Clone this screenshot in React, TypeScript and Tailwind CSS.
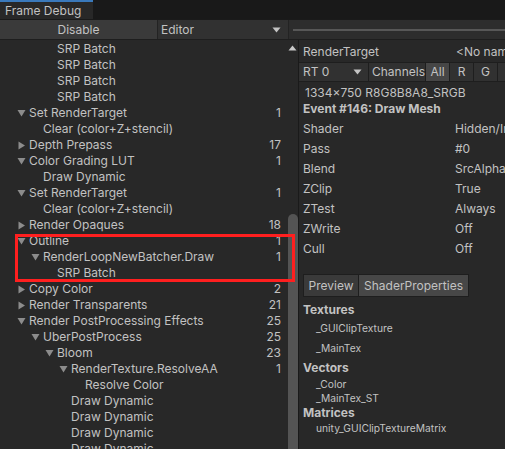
import React from "react";

type Row = { label: string; level: number; arrow?: "down" | "right"; count?: string };

const rows: Row[] = [
  { label: "SRP Batch", level: 3 },
  { label: "SRP Batch", level: 3 },
  { label: "SRP Batch", level: 3 },
  { label: "SRP Batch", level: 3 },
  { label: "Set RenderTarget", level: 1, arrow: "down", count: "1" },
  { label: "Clear (color+Z+stencil)", level: 2 },
  { label: "Depth Prepass", level: 1, arrow: "right", count: "17" },
  { label: "Color Grading LUT", level: 1, arrow: "down", count: "1" },
  { label: "Draw Dynamic", level: 2 },
  { label: "Set RenderTarget", level: 1, arrow: "down", count: "1" },
  { label: "Clear (color+Z+stencil)", level: 2 },
  { label: "Render Opaques", level: 1, arrow: "right", count: "18" },
  { label: "Outline", level: 1, arrow: "down", count: "1" },
  { label: "RenderLoopNewBatcher.Draw", level: 2, arrow: "down", count: "1" },
  { label: "SRP Batch", level: 3 },
  { label: "Copy Color", level: 1, arrow: "right", count: "2" },
  { label: "Render Transparents", level: 1, arrow: "right", count: "21" },
  { label: "Render PostProcessing Effects", level: 1, arrow: "down", count: "25" },
  { label: "UberPostProcess", level: 2, arrow: "down", count: "25" },
  { label: "Bloom", level: 3, arrow: "down", count: "23" },
  { label: "RenderTexture.ResolveAA", level: 4, arrow: "down", count: "1" },
  { label: "Resolve Color", level: 5 },
  { label: "Draw Dynamic", level: 4 },
  { label: "Draw Dynamic", level: 4 },
  { label: "Draw Dynamic", level: 4 },
  { label: "Draw Dynamic", level: 4 },
];

const indent: Record<number, string> = {
  1: "pl-[17px]",
  2: "pl-[31px]",
  3: "pl-[45px]",
  4: "pl-[59px]",
  5: "pl-[73px]",
};

function Arrow({ dir }: { dir: "down" | "right" }) {
  return dir === "down" ? (
    <svg width="9" height="8" viewBox="0 0 9 8">
      <path d="M0.5 1 L8.5 1 L4.5 7.5 Z" fill="#8c8c8c" />
    </svg>
  ) : (
    <svg width="9" height="9" viewBox="0 0 9 9">
      <path d="M1.5 0.5 L8 4.5 L1.5 8.5 Z" fill="#8c8c8c" />
    </svg>
  );
}

function Caret({ className = "" }: { className?: string }) {
  return (
    <svg width="9" height="6" viewBox="0 0 9 6" className={className}>
      <path d="M0.5 0.5 L8.5 0.5 L4.5 5.5 Z" fill="#c4c4c4" />
    </svg>
  );
}

const props: [string, string][] = [
  ["Shader", "Hidden/Internal-GUITexture"],
  ["Pass", "#0"],
  ["Blend", "SrcAlpha OneMinusSrcAlpha"],
  ["ZClip", "True"],
  ["ZTest", "Always"],
  ["ZWrite", "Off"],
  ["Cull", "Off"],
];

export default function App() {
  return (
    <div
      className="relative w-[505px] h-[449px] overflow-hidden bg-[#282828] flex flex-col text-[#c2c2c2] text-[12px] leading-none"
      style={{ fontFamily: "Inter, 'Noto Sans', sans-serif" }}
    >
      {/* Tab bar */}
      <div className="h-[19px] bg-[#191919] flex shrink-0">
        <div className="w-[93px] h-full bg-[#282828] border-t-2 border-[#3a79bb] flex items-center pl-[5px] text-[12px] whitespace-nowrap">
          Frame Debug
        </div>
      </div>
      {/* Toolbar */}
      <div className="h-[21px] flex shrink-0 bg-[#2d2d2d] border-t border-[#1a1a1a] border-b border-b-[#1e1e1e]">
        <div className="w-[158px] bg-[#3a3a3a] flex items-center justify-center border-r border-[#232323]">
          Disable
        </div>
        <div className="w-[131px] bg-[#313131] flex items-center justify-between pl-[3px] pr-[7px] border-r border-[#232323]">
          <span>Editor</span>
          <Caret />
        </div>
        <div className="flex-1 flex items-center pl-[4px]">
          <div className="h-[2px] w-full bg-[#575757]" />
        </div>
      </div>
      {/* Main */}
      <div className="flex-1 flex min-h-0">
        {/* Tree */}
        <div className="w-[287px] shrink-0 pt-[1px] overflow-hidden">
          {rows.map((r, i) => (
            <div key={i} className={`h-[16px] flex items-center pr-[6px] whitespace-nowrap ${indent[r.level]}`}>
              <div className="w-[12px] shrink-0 flex items-center">{r.arrow ? <Arrow dir={r.arrow} /> : null}</div>
              <span className="flex-1">{r.label}</span>
              {r.count ? <span>{r.count}</span> : null}
            </div>
          ))}
        </div>
        {/* Scrollbar */}
        <div className="w-[11px] shrink-0 bg-[#282828] flex flex-col items-center pt-[5px]">
          <svg width="9" height="6" viewBox="0 0 9 6">
            <path d="M0.5 5.5 L8.5 5.5 L4.5 0.5 Z" fill="#c8c8c8" />
          </svg>
          <div className="mt-[163px] w-[10px] flex-1 bg-[#545454] rounded-t-[5px]" />
        </div>
        <div className="w-[1px] bg-[#1a1a1a] shrink-0" />
        {/* Right panel */}
        <div className="flex-1 min-w-0 overflow-hidden flex flex-col pt-[2px]">
          <div className="h-[20px] flex items-center pl-[4px] whitespace-nowrap">
            <span className="w-[153px] shrink-0">RenderTarget</span>
            <span>&lt;No name&gt;</span>
          </div>
          <div className="h-[20px] flex border-y border-[#1e1e1e] whitespace-nowrap">
            <div className="w-[70px] shrink-0 bg-[#313131] flex items-center justify-between pl-[4px] pr-[6px] border-r border-[#1e1e1e]">
              <span>RT 0</span>
              <Caret />
            </div>
            <div className="w-[57px] shrink-0 flex items-center pl-[3px] bg-[#313131] border-r border-[#1e1e1e]">Channels</div>
            <div className="w-[24px] shrink-0 flex items-center justify-center bg-[#464646] border-r border-[#1e1e1e]">All</div>
            <div className="w-[24px] shrink-0 flex items-center justify-center bg-[#313131] border-r border-[#1e1e1e]">R</div>
            <div className="w-[24px] shrink-0 flex items-center justify-center bg-[#313131] border-r border-[#1e1e1e]">G</div>
            <div className="w-[24px] shrink-0 flex items-center justify-center bg-[#313131]">B</div>
          </div>
          <div className="h-[18px] flex items-center pl-[6px] pt-[4px] whitespace-nowrap">1334x750 R8G8B8A8_SRGB</div>
          <div className="h-[18px] flex items-center pl-[4px] font-bold whitespace-nowrap">Event #146: Draw Mesh</div>
          <div className="flex flex-col pt-[1px]">
            {props.map(([k, v]) => (
              <div key={k} className="h-[20px] flex items-center pl-[4px] whitespace-nowrap">
                <span className="w-[152px] shrink-0">{k}</span>
                <span>{v}</span>
              </div>
            ))}
          </div>
          <div className="flex pl-[4px] mt-[15px]">
            <div className="flex border border-[#1e1e1e] h-[23px]">
              <div className="w-[55px] flex items-center justify-center bg-[#3a3a3a] border-r border-[#1e1e1e]">Preview</div>
              <div className="w-[109px] flex items-center justify-center bg-[#474747]">ShaderProperties</div>
            </div>
          </div>
          <div className="flex flex-col pl-[4px] pt-[6px] whitespace-nowrap">
            <div className="h-[14px] flex items-center font-bold">Textures</div>
            <div className="h-[18px] flex items-center pl-[13px] text-[10.25px] pt-[4px]">_GUIClipTexture</div>
            <div className="h-[20px] flex items-center pl-[13px] text-[10.25px] pt-[6px]">_MainTex</div>
            <div className="h-[20px] flex items-center font-bold pt-[6px]">Vectors</div>
            <div className="h-[16px] flex items-center pl-[13px] text-[10.25px] pt-[2px]">_Color</div>
            <div className="h-[14px] flex items-center pl-[13px] text-[10.25px]">_MainTex_ST</div>
            <div className="h-[15px] flex items-center font-bold pt-[1px]">Matrices</div>
            <div className="h-[16px] flex items-center pl-[13px] text-[10.25px] pt-[1px]">unity_GUIClipTextureMatrix</div>
          </div>
        </div>
      </div>
      {/* Red annotation box */}
      <div className="absolute left-[15px] top-[234px] w-[280px] h-[48px] border-[3px] border-[#ff1f1f] pointer-events-none" />
    </div>
  );
}
